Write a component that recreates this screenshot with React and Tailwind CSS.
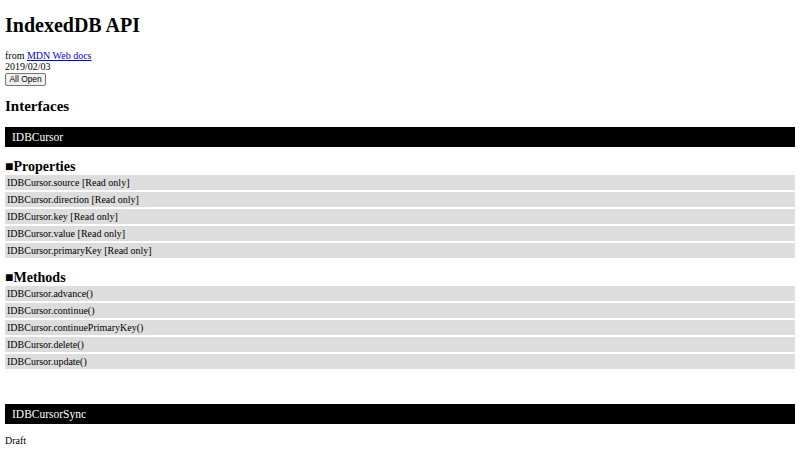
import React from "react";

const properties = [
  "IDBCursor.source [Read only]",
  "IDBCursor.direction [Read only]",
  "IDBCursor.key [Read only]",
  "IDBCursor.value [Read only]",
  "IDBCursor.primaryKey [Read only]",
];

const methods = [
  "IDBCursor.advance()",
  "IDBCursor.continue()",
  "IDBCursor.continuePrimaryKey()",
  "IDBCursor.delete()",
  "IDBCursor.update()",
];

const Bar = ({ title }) => (
  <div className="h-[20px] bg-black text-white text-[11.5px] leading-[20px] pl-[7px]">
    {title}
  </div>
);

const Group = ({ title, items, className = "" }) => (
  <div className={className}>
    <h3 className="text-[14px] leading-[16px] font-bold">■{title}</h3>
    <ul className="flex flex-col gap-[2px]">
      {items.map((item, index) => (
        <li key={index} className="h-[15px] leading-[15px] bg-[#dddddd] pl-[2px]">
          {item}
        </li>
      ))}
    </ul>
  </div>
);

const App = () => {
  return (
    <div className="min-h-screen bg-white text-black font-['Liberation_Serif',serif] text-[10px] leading-[11.5px] px-[5px] pt-[13.5px] pb-[10px]">
      {/* Header */}
      <h1 className="text-[20px] leading-[23px] font-bold">IndexedDB API</h1>
      <div className="mt-[13.4px]">
        <p>
          from{" "}
          <a href="#" className="text-[#0000ee] underline">
            MDN Web docs
          </a>
        </p>
        <p>2019/02/03</p>
        <button className="mt-0 h-[13px] px-[3.5px] border border-[#767676] rounded-[2px] bg-[#efefef] font-['Liberation_Sans',sans-serif] text-[8.4px] leading-[11px] text-black">
          All Open
        </button>
      </div>

      <h2 className="mt-[12.5px] mb-[11.5px] text-[15px] leading-[17px] font-bold">Interfaces</h2>

      {/* IDBCursor */}
      <Bar title="IDBCursor" />
      <Group title="Properties" items={properties} className="mt-[12.3px]" />
      <Group title="Methods" items={methods} className="mt-[11.5px]" />

      {/* IDBCursorSync */}
      <div className="mt-[35px]">
        <Bar title="IDBCursorSync" />
      </div>
      <p className="mt-[11.5px]">Draft</p>
    </div>
  );
};

export default App;
